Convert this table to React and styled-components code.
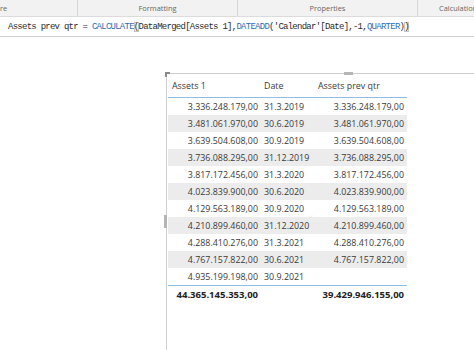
import styled, { createGlobalStyle } from 'styled-components';

const GlobalStyle = createGlobalStyle`
  html, body {
    margin: 0;
    padding: 0;
    background: #ffffff;
    width: 474px;
    height: 350px;
    overflow: hidden;
  }
  #root {
    height: 350px;
  }
`;

const Page = styled.div`
  display: flex;
  flex-direction: column;
  height: 350px;
  font-family: "Open Sans", "Liberation Sans", sans-serif;
`;

const TabBar = styled.div`
  display: grid;
  grid-template-columns: 78px 160px 180px 1fr;
  height: 16px;
  background: #f2f2f2;
  border-bottom: 1px solid #dcdcdc;
`;

const Tab = styled.div`
  display: flex;
  align-items: center;
  justify-content: ${(p) => (p.$align === 'left' ? 'flex-start' : 'center')};
  font-size: 7.4px;
  color: #666;
  border-right: ${(p) => (p.$last ? 'none' : '1px solid #d6d6d6')};
  overflow: hidden;
  white-space: nowrap;
  padding-left: ${(p) => p.$indent || '0'};
`;

const FormulaBar = styled.div`
  height: 19px;
  display: flex;
  align-items: center;
  padding-left: 8px;
  border-bottom: 1px solid #d0d0d0;
  font-family: "Liberation Mono", "DejaVu Sans Mono", monospace;
  font-size: 9px;
  letter-spacing: -0.74px;
  color: #2b2b2b;
  white-space: pre;
`;

const Fn = styled.span`
  color: #2f6db5;
`;

const Brace = styled.span`
  box-shadow: inset 0 0 0 1px #c4c4c4;
  background: #f6f6f6;
`;

const Canvas = styled.div`
  flex: 1;
  display: flex;
  padding-top: 36px;
  padding-left: 166px;
`;

const Frame = styled.div`
  position: relative;
  flex: 1;
  border-top: 1px solid #cfcfcf;
  border-left: 1px solid #cfcfcf;
  padding-left: 1px;
`;

const Corner = styled.div`
  position: absolute;
  left: -2px;
  top: -2px;
  width: 5px;
  height: 5px;
  border-top: 2px solid #8a8a8a;
  border-left: 2px solid #8a8a8a;
  box-sizing: border-box;
`;

const TopHandle = styled.div`
  position: absolute;
  left: 177px;
  top: -2px;
  width: 9px;
  height: 3px;
  background: #b5b5b5;
`;

const SideHandle = styled.div`
  position: absolute;
  left: -3px;
  top: 141px;
  width: 3px;
  height: 13px;
  background: #b5b5b5;
`;

const Table = styled.div`
  width: 239px;
  font-size: 8.9px;
  color: #3a3a3a;
`;

const Row = styled.div`
  display: grid;
  grid-template-columns: 92px 54px 93px;
  height: ${(p) => (p.$head ? '23px' : p.$total ? '16px' : '17px')};
  align-items: center;
  background: ${(p) => (p.$alt ? '#ececec' : 'transparent')};
  border-bottom: ${(p) => (p.$head ? '1px solid #8fbde3' : 'none')};
  border-top: ${(p) => (p.$total ? '1px solid #8fbde3' : 'none')};
  font-weight: ${(p) => (p.$total ? 700 : 400)};
  font-size: ${(p) => (p.$total ? '9.5px' : 'inherit')};
  color: ${(p) => (p.$total ? '#222' : '#3a3a3a')};
`;

const Cell = styled.div`
  text-align: ${(p) => (p.$num ? 'right' : 'left')};
  padding-left: ${(p) => (p.$num ? '0' : '4px')};
  padding-right: ${(p) => (p.$num ? p.$pr || '2px' : '0')};
  white-space: nowrap;
`;

const rows = [
  ['3.336.248.179,00', '31.3.2019', '3.336.248.179,00'],
  ['3.481.061.970,00', '30.6.2019', '3.481.061.970,00'],
  ['3.639.504.608,00', '30.9.2019', '3.639.504.608,00'],
  ['3.736.088.295,00', '31.12.2019', '3.736.088.295,00'],
  ['3.817.172.456,00', '31.3.2020', '3.817.172.456,00'],
  ['4.023.839.900,00', '30.6.2020', '4.023.839.900,00'],
  ['4.129.563.189,00', '30.9.2020', '4.129.563.189,00'],
  ['4.210.899.460,00', '31.12.2020', '4.210.899.460,00'],
  ['4.288.410.276,00', '31.3.2021', '4.288.410.276,00'],
  ['4.767.157.822,00', '30.6.2021', '4.767.157.822,00'],
  ['4.935.199.198,00', '30.9.2021', ''],
];

export default function App() {
  return (
    <Page>
      <GlobalStyle />
      <TabBar>
        <Tab $align="left">re</Tab>
        <Tab>Formatting</Tab>
        <Tab>Properties</Tab>
        <Tab $align="left" $indent="21px" $last>Calculation</Tab>
      </TabBar>
      <FormulaBar>
        {'Assets prev qtr = '}
        <Fn>CALCULATE</Fn>
        <Brace>(</Brace>
        {'DataMerged[Assets 1],'}
        <Fn>DATEADD</Fn>
        {"('Calendar'[Date],-1,"}
        <Fn>QUARTER</Fn>
        {')'}
        <Brace>)</Brace>
      </FormulaBar>
      <Canvas>
        <Frame>
          <Corner />
          <TopHandle />
          <SideHandle />
          <Table>
            <Row $head>
              <Cell>Assets 1</Cell>
              <Cell>Date</Cell>
              <Cell>Assets prev qtr</Cell>
            </Row>
            {rows.map((r, idx) => (
              <Row key={idx} $alt={idx % 2 === 1}>
                <Cell $num>{r[0]}</Cell>
                <Cell>{r[1]}</Cell>
                <Cell $num $pr="3px">{r[2]}</Cell>
              </Row>
            ))}
            <Row $total>
              <Cell $num>44.365.145.353,00</Cell>
              <Cell></Cell>
              <Cell $num $pr="3px">39.429.946.155,00</Cell>
            </Row>
          </Table>
        </Frame>
      </Canvas>
    </Page>
  );
}
